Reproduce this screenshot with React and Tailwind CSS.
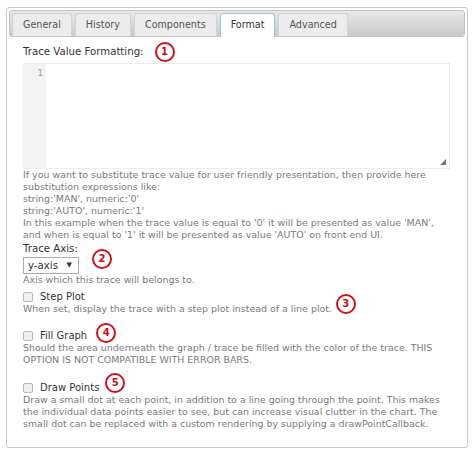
import React from "react";

const font = { fontFamily: '"DejaVu Sans", Verdana, sans-serif' };

function Badge({ n, className = "" }) {
  return (
    <span
      className={`inline-flex h-[20px] w-[20px] items-center justify-center rounded-full border-2 border-[#d0101a] text-[10px] font-bold leading-none text-[#c4101a] ${className}`}
    >
      {n}
    </span>
  );
}

function Tab({ label, active }) {
  return (
    <div
      className={
        active
          ? "-mb-px flex h-[24px] items-center rounded-t-[3px] border border-b-0 border-[#a6bfe4] bg-white px-[10px] text-[9.6px] text-[#333]"
          : "flex h-[23px] items-center rounded-t-[3px] border border-b-0 border-[#d3d3d3] bg-[#ececec] px-[10px] text-[9.6px] text-[#555]"
      }
    >
      {label}
    </div>
  );
}

function CheckRow({ label, badge, badgeClass, className = "", children }) {
  return (
    <div className={className}>
      <div className="flex h-[13px] items-center">
        <span className="h-[10px] w-[10px] rounded-[2px] border border-[#b5b5b5] bg-[#f0f0f0]" />
        <span className="ml-[7px] text-[10px] text-[#333]">{label}</span>
        <Badge n={badge} className={badgeClass} />
      </div>
      <div className="whitespace-nowrap text-[9.45px] leading-[12px] text-[#7a7a7a]">{children}</div>
    </div>
  );
}

export default function App() {
  return (
    <div className="h-[454px] w-[474px] overflow-hidden bg-white pl-[6px] pt-[7px]" style={font}>
      <div className="h-[441px] w-[462px] rounded-[3px] border border-[#c8c8c8] bg-white p-[2px]">
        <div className="flex h-[27px] items-end gap-[3px] rounded-[3px] border border-[#c4c4c4] bg-gradient-to-b from-[#e9e9e9] to-[#c9c9c9] px-[2px]">
          <Tab label="General" />
          <Tab label="History" />
          <Tab label="Components" />
          <Tab label="Format" active />
          <Tab label="Advanced" />
        </div>

        <div className="px-[14px] pt-[5px]">
          <div className="flex h-[20px] items-center">
            <span className="text-[10.2px] text-[#333]">Trace Value Formatting:</span>
            <Badge n="1" className="ml-[11px]" />
          </div>

          <div className="relative mt-[1px] flex h-[106px] w-[427px] border border-[#ececec] bg-white">
            <div className="w-[22px] bg-[#f3f3f3] pr-[3px] pt-[3px] text-right text-[8.5px] text-[#999]">1</div>
            <svg className="absolute bottom-[3px] right-[3px]" width="6" height="6" viewBox="0 0 6 6">
              <path d="M6 0 L6 6 L0 6 Z" fill="#777" />
            </svg>
          </div>

          <div className="whitespace-nowrap text-[9.45px] leading-[12px] text-[#7a7a7a]">
            <div>If you want to substitute trace value for user friendly presentation, then provide here</div>
            <div>substitution expressions like:</div>
            <div>string:'MAN', numeric:'0'</div>
            <div>string:'AUTO', numeric:'1'</div>
            <div>In this example when the trace value is equal to '0' it will be presented as value 'MAN',</div>
            <div>and when is equal to '1' it will be presented as value 'AUTO' on front end UI.</div>
          </div>

          <div className="mt-[1px] text-[10.2px] leading-[13px] text-[#333]">Trace Axis:</div>
          <div className="mt-[2px] flex items-center">
            <div className="flex h-[17px] w-[56px] items-center justify-between border border-[#ababab] bg-white pl-[4px] pr-[6px] text-[10.2px] text-[#333]">
              <span>y-axis</span>
              <span className="text-[7px]">▼</span>
            </div>
            <Badge n="2" className="ml-[13px] -mt-[14px]" />
          </div>
          <div className="text-[9.45px] leading-[12px] text-[#7a7a7a]">Axis which this trace will belongs to.</div>

          <CheckRow label="Step Plot" badge="3" badgeClass="relative left-[251px] top-[7px]" className="mt-[4px]">
            When set, display the trace with a step plot instead of a line plot.
          </CheckRow>
          <CheckRow label="Fill Graph" badge="4" badgeClass="ml-[9px] -mt-[6px]" className="mt-[14px]">
            <div>Should the area underneath the graph / trace be filled with the color of the trace. THIS</div>
            <div>OPTION IS NOT COMPATIBLE WITH ERROR BARS.</div>
          </CheckRow>
          <CheckRow label="Draw Points" badge="5" badgeClass="ml-[6px] -mt-[10px]" className="mt-[15px]">
            <div>Draw a small dot at each point, in addition to a line going through the point. This makes</div>
            <div>the individual data points easier to see, but can increase visual clutter in the chart. The</div>
            <div>small dot can be replaced with a custom rendering by supplying a drawPointCallback.</div>
          </CheckRow>
        </div>
      </div>
    </div>
  );
}
